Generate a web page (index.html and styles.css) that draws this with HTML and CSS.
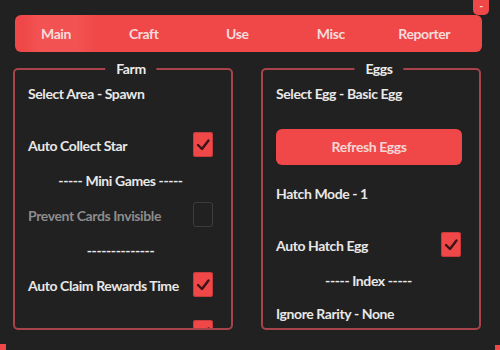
FILE: index.html
```html
<!DOCTYPE html>
<html>
<head>
<meta charset="utf-8">
<link rel="stylesheet" href="styles.css">
</head>
<body>
<div class="app">
  <div class="min-btn">-</div>
  <nav class="tabs">
    <div class="tab active">Main</div>
    <div class="tab">Craft</div>
    <div class="tab">Use</div>
    <div class="tab">Misc</div>
    <div class="tab">Reporter</div>
  </nav>
  <div class="panels">
    <section class="panel">
      <div class="panel-title">Farm</div>
      <div class="panel-body">
        <div class="row">Select Area - Spawn</div>
        <div class="row spaced">Auto Collect Star<span class="check on"><svg viewBox="0 0 20 24"><path d="M5 12.5 L9 16.5 L15.5 8"/></svg></span></div>
        <div class="row center">----- Mini Games -----</div>
        <div class="row muted">Prevent Cards Invisible<span class="check off"></span></div>
        <div class="row center">--------------</div>
        <div class="row">Auto Claim Rewards Time<span class="check on"><svg viewBox="0 0 20 24"><path d="M5 12.5 L9 16.5 L15.5 8"/></svg></span></div>
        <div class="row gap-sm"><span></span><span class="check on"><svg viewBox="0 0 20 24"><path d="M5 12.5 L9 16.5 L15.5 8"/></svg></span></div>
      </div>
    </section>
    <section class="panel">
      <div class="panel-title">Eggs</div>
      <div class="panel-body">
        <div class="row">Select Egg - Basic Egg</div>
        <div class="button">Refresh Eggs</div>
        <div class="row gap-xs">Hatch Mode - 1</div>
        <div class="row spaced">Auto Hatch Egg<span class="check on"><svg viewBox="0 0 20 24"><path d="M5 12.5 L9 16.5 L15.5 8"/></svg></span></div>
        <div class="row center">----- Index -----</div>
        <div class="row short">Ignore Rarity - None</div>
      </div>
    </section>
  </div>
  <div class="corner corner-left"></div>
  <div class="corner corner-right"></div>
</div>
</body>
</html>
```

FILE: styles.css
```css
* { box-sizing: border-box; }
html, body {
  margin: 0;
  padding: 0;
  background: #212121;
}
.app {
  position: relative;
  width: 500px;
  height: 350px;
  overflow: hidden;
  padding: 15px 0 0 0;
  font-family: Lato, "Noto Sans", sans-serif;
  font-weight: 700;
  font-size: 14px;
  letter-spacing: -0.4px;
  color: #e8e8e8;
  white-space: nowrap;
}
.min-btn {
  position: absolute;
  top: 0;
  left: 473px;
  width: 16px;
  height: 15px;
  background: #f04848;
  border-radius: 0 0 5px 5px;
  color: #f6dede;
  font-size: 11px;
  line-height: 11px;
  text-align: center;
  z-index: 2;
}
.tabs {
  margin-left: 15px;
  width: 467px;
  height: 37px;
  background: #f04848;
  border-radius: 6px;
  display: grid;
  grid-template-columns: 82px repeat(4, 93.5px);
  align-items: stretch;
}
.tab {
  display: flex;
  align-items: center;
  justify-content: center;
  color: #f6dcdc;
}
.tab.active {
  background: linear-gradient(90deg, rgba(240,72,72,0) 10%, rgba(255,120,120,0.22) 30%, rgba(255,120,120,0.22) 75%, rgba(240,72,72,0) 100%);
}
.panels {
  margin: 16px 0 0 13px;
  display: grid;
  grid-template-columns: 220px 220px;
  column-gap: 28px;
}
.panel {
  position: relative;
  height: 262px;
  border: 2px solid #a9434b;
  border-radius: 5px;
}
.panel-title {
  position: absolute;
  top: -10px;
  left: 50%;
  transform: translateX(calc(-50% + 8px));
  padding: 0 11px;
  background: #212121;
  line-height: 18px;
  color: #ececec;
}
.panel-body {
  height: 100%;
  overflow: hidden;
  padding: 5px 18px 0 13px;
  display: flex;
  flex-direction: column;
}
.panel-body > * { flex-shrink: 0; }
.row {
  height: 35px;
  display: flex;
  align-items: center;
  justify-content: space-between;
  padding-top: 2px;
}
.row.spaced { margin-top: 17px; }
.row.gap-sm { margin-top: 13px; }
.row.gap-xs { margin-top: 10.5px; }
.row.short { margin-top: -2px; }
.row.center { justify-content: center; }
.row.muted { color: #8c8c8c; }
.check {
  width: 20px;
  height: 25px;
  border-radius: 3px;
  margin-top: -3px;
  display: block;
}
.check.on {
  background: #f04848;
  box-shadow: inset 0 0 0 1px #c83a3a;
}
.check.off {
  border: 1.5px solid #3c3c3c;
}
.check svg {
  width: 20px;
  height: 25px;
  display: block;
  fill: none;
  stroke: #3a1416;
  stroke-width: 2.4;
  stroke-linecap: round;
  stroke-linejoin: round;
}
.button {
  margin-top: 18.5px;
  height: 36px;
  border-radius: 6px;
  background: #f04848;
  color: #f6d6d6;
  display: flex;
  align-items: center;
  justify-content: center;
  margin-right: -1px;
}
.corner {
  position: absolute;
  bottom: 0;
  width: 6px;
  height: 6px;
  background: #f04848;
}
.corner-left { left: 0; }
.corner-right { right: 0; width: 5px; height: 5px; }
```
